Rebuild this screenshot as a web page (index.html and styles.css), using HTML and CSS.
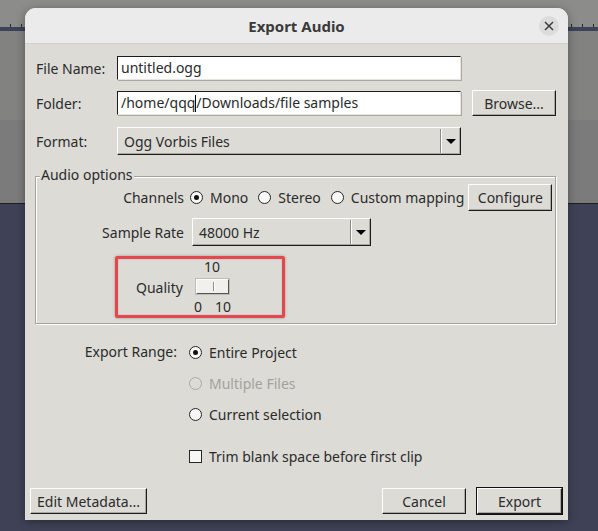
FILE: index.html
```html
<!DOCTYPE html>
<html lang="en">
<head>
    <meta charset="UTF-8">
    <meta name="viewport" content="width=device-width, initial-scale=1.0">
    <title>Export Audio</title>
    <link rel="stylesheet" href="styles.css">
</head>
<body>
    <div class="dialog">
        <div class="titlebar">
            <span class="title">Export Audio</span>
            <span class="close">
                <svg width="10" height="10" viewBox="0 0 10 10"><path d="M1 1L9 9M9 1L1 9" stroke="#3b3b3b" stroke-width="1.5"/></svg>
            </span>
        </div>

        <div class="content">
            <div class="row">
                <span class="label">File Name:</span>
                <div class="input">untitled.ogg</div>
            </div>
            <div class="row row-folder">
                <span class="label">Folder:</span>
                <div class="input">/home/qqq<span class="caret"></span>/Downloads/file samples</div>
                <div class="btn btn-browse">Browse...</div>
            </div>
            <div class="row row-format">
                <span class="label">Format:</span>
                <div class="select select-format">
                    <span class="select-text">Ogg Vorbis Files</span>
                    <span class="select-arrow"></span>
                </div>
            </div>

            <div class="group">
                <span class="legend">Audio options</span>
                <div class="options-grid">
                    <span class="opt-label">Channels</span>
                    <div class="channels">
                        <span class="radio checked"></span><span class="radio-text">Mono</span>
                        <span class="radio"></span><span class="radio-text">Stereo</span>
                        <span class="radio"></span><span class="radio-text">Custom mapping</span>
                        <div class="btn btn-configure">Configure</div>
                    </div>
                    <span class="opt-label">Sample Rate</span>
                    <div class="select select-rate">
                        <span class="select-text">48000 Hz</span>
                        <span class="select-arrow"></span>
                    </div>
                </div>
                <div class="highlight">
                    <span class="quality-label">Quality</span>
                    <div class="quality">
                        <span class="q-value">10</span>
                        <div class="slider"><span class="thumb"></span></div>
                        <span class="q-range"><span>0</span><span>10</span></span>
                    </div>
                </div>
            </div>

            <div class="range">
                <span class="range-label">Export Range:</span>
                <div class="range-item"><span class="radio checked"></span><span class="radio-text">Entire Project</span></div>
                <div class="range-item disabled"><span class="radio"></span><span class="radio-text">Multiple Files</span></div>
                <div class="range-item"><span class="radio"></span><span class="radio-text">Current selection</span></div>
                <div class="range-item trim"><span class="checkbox"></span><span class="radio-text">Trim blank space before first clip</span></div>
            </div>
        </div>

        <div class="footer">
            <div class="btn btn-meta">Edit Metadata...</div>
            <div class="footer-right">
                <div class="btn btn-cancel">Cancel</div>
                <div class="btn btn-export">Export</div>
            </div>
        </div>
    </div>
</body>
</html>
```

FILE: styles.css
```css
body {
    margin: 0;
    height: 531px;
    overflow: hidden;
    font-family: "Noto Sans", "Open Sans", sans-serif;
    font-size: 14px;
    color: #2b2b2b;
    background:
        repeating-linear-gradient(to right, transparent 0 10px, #2a2a2a 10px 11px) 0 24px / 100% 3px no-repeat,
        linear-gradient(to bottom, #8c8c8a 0 27px, #3d4258 27px 31px, #828280 31px 120px, #7b7b7b 120px 203px, #1e1e1e 203px 204px, #3f4256 204px);
}
.dialog {
    margin: 8px 0 0 25px;
    width: 543px;
    height: 512px;
    background-color: #dcdbd6;
    border-radius: 11px 11px 0 0;
    box-shadow: 0 2px 10px rgba(0, 0, 0, 0.35);
    display: flex;
    flex-direction: column;
}
.titlebar {
    height: 35px;
    background-color: #ebebeb;
    border-bottom: 1px solid #cfcfcc;
    border-radius: 11px 11px 0 0;
    display: flex;
    align-items: center;
    justify-content: center;
    position: relative;
}
.title {
    font-weight: bold;
    font-size: 15px;
    color: #3a3a3a;
}
.close {
    position: absolute;
    right: 9px;
    top: 8px;
    width: 20px;
    height: 20px;
    border-radius: 50%;
    background-color: #dcdcdc;
    display: flex;
    align-items: center;
    justify-content: center;
}
.content {
    padding: 12px 11px 0;
}
.row {
    display: flex;
    align-items: center;
    height: 24px;
}
.row-folder {
    margin-top: 10px;
    height: 26px;
}
.row-format {
    margin-top: 11px;
    height: 28px;
}
.label {
    width: 81px;
}
.input {
    box-sizing: border-box;
    width: 344px;
    height: 24px;
    background-color: #fff;
    border: 1px solid;
    border-color: #1c1c1c #e6e5e0 #e6e5e0 #1c1c1c;
    box-shadow: 1px 1px 0 #a9a8a3;
    padding: 0 3px;
    line-height: 22px;
    white-space: nowrap;
}
.caret {
    display: inline-block;
    width: 1px;
    height: 17px;
    background-color: #000;
    vertical-align: -4px;
}
.btn {
    box-sizing: border-box;
    height: 26px;
    display: flex;
    align-items: center;
    justify-content: center;
    background-color: #dcdbd6;
    border: 1px solid;
    border-color: #fff #1c1c1c #1c1c1c #fff;
    box-shadow: inset -1px -1px 0 #a9a8a3;
}
.btn-browse {
    width: 84px;
    margin-left: 11px;
}
.select {
    box-sizing: border-box;
    display: flex;
    align-items: center;
    height: 28px;
    border: 1px solid;
    border-color: #fff #1c1c1c #1c1c1c #fff;
    box-shadow: inset -1px -1px 0 #a9a8a3;
}
.select-format {
    width: 344px;
}
.select-text {
    flex: 1;
    padding-left: 6px;
}
.select-arrow {
    width: 19px;
    height: 24px;
    border-left: 1px solid #8a8984;
    box-shadow: inset 1px 0 #fff;
    position: relative;
}
.select-arrow::after {
    content: "";
    position: absolute;
    left: 5px;
    top: 10px;
    border-left: 5px solid transparent;
    border-right: 5px solid transparent;
    border-top: 5px solid #000;
}
.group {
    position: relative;
    margin: 21px 0 0 -1px;
    width: 521px;
    box-sizing: border-box;
    border: 1px solid #a3a29d;
    box-shadow: inset 1px 1px 0 #fff, 1px 1px 0 #fff;
    padding: 7px 0 5px;
}
.legend {
    position: absolute;
    left: 4px;
    top: -12px;
    padding: 0 1px;
    background-color: #dcdbd6;
    line-height: 20px;
}
.options-grid {
    display: grid;
    grid-template-columns: 148px auto;
    column-gap: 6px;
    row-gap: 7px;
    align-items: center;
}
.opt-label {
    text-align: right;
}
.channels {
    display: flex;
    align-items: center;
    height: 27px;
}
.radio {
    box-sizing: border-box;
    width: 13px;
    height: 13px;
    border: 1px solid #262626;
    border-radius: 50%;
    background-color: #f7f7f5;
    display: inline-flex;
    align-items: center;
    justify-content: center;
    flex-shrink: 0;
}
.radio.checked::after {
    content: "";
    width: 5px;
    height: 5px;
    border-radius: 50%;
    background-color: #111;
}
.radio-text {
    margin-left: 7px;
    margin-right: 10px;
}
.btn-configure {
    width: 84px;
    height: 27px;
    margin-left: -6px;
}
.select-rate {
    width: 179px;
    margin-left: 2px;
}
.highlight {
    box-sizing: border-box;
    margin: 10px 0 0 79px;
    width: 170px;
    height: 62px;
    border: 3px solid #e4484c;
    border-radius: 2px;
    box-shadow: 0 0 3px rgba(0, 0, 0, 0.3), inset 0 0 2px rgba(0, 0, 0, 0.2);
    display: flex;
    align-items: center;
}
.quality-label {
    margin-left: 18px;
    width: 58px;
}
.quality {
    display: flex;
    flex-direction: column;
    align-items: flex-start;
    width: 38px;
}
.q-value {
    line-height: 16px;
    margin-left: 10px;
}
.slider {
    box-sizing: border-box;
    margin: 4px 0 0 2px;
    width: 33px;
    height: 15px;
    background-color: #f1f0ec;
    border: 1px solid;
    border-color: #fff #55544f #55544f #fff;
    box-shadow: 0 0 0 1px #bdbcb7;
    position: relative;
}
.thumb {
    position: absolute;
    left: 16px;
    top: 2px;
    width: 1px;
    height: 9px;
    background-color: #8d8c87;
    box-shadow: 1px 0 #fff;
}
.q-range {
    display: flex;
    gap: 13px;
    line-height: 16px;
    margin-top: 5px;
}
.range {
    display: grid;
    grid-template-columns: 141px auto;
    column-gap: 12px;
    margin-top: 18px;
}
.range-label {
    text-align: right;
    line-height: 20px;
}
.range-item {
    grid-column: 2;
    display: flex;
    align-items: center;
    height: 20px;
    margin-bottom: 11px;
}
.range-item:first-of-type {
    grid-row: 1;
}
.range-item.disabled {
    color: #a3a29e;
}
.range-item.disabled .radio {
    border-color: #aaa9a5;
    background-color: #dcdbd6;
}
.range-item.trim {
    margin-top: 11px;
}
.checkbox {
    box-sizing: border-box;
    width: 13px;
    height: 13px;
    border: 1px solid #262626;
    background-color: #f7f7f5;
}
.footer {
    margin-top: auto;
    display: flex;
    justify-content: space-between;
    padding: 0 6px 6px 5px;
}
.btn-meta {
    width: 117px;
}
.footer-right {
    display: flex;
    gap: 11px;
}
.btn-cancel {
    width: 84px;
}
.btn-export {
    width: 85px;
    outline: 1px solid #111;
}
```
